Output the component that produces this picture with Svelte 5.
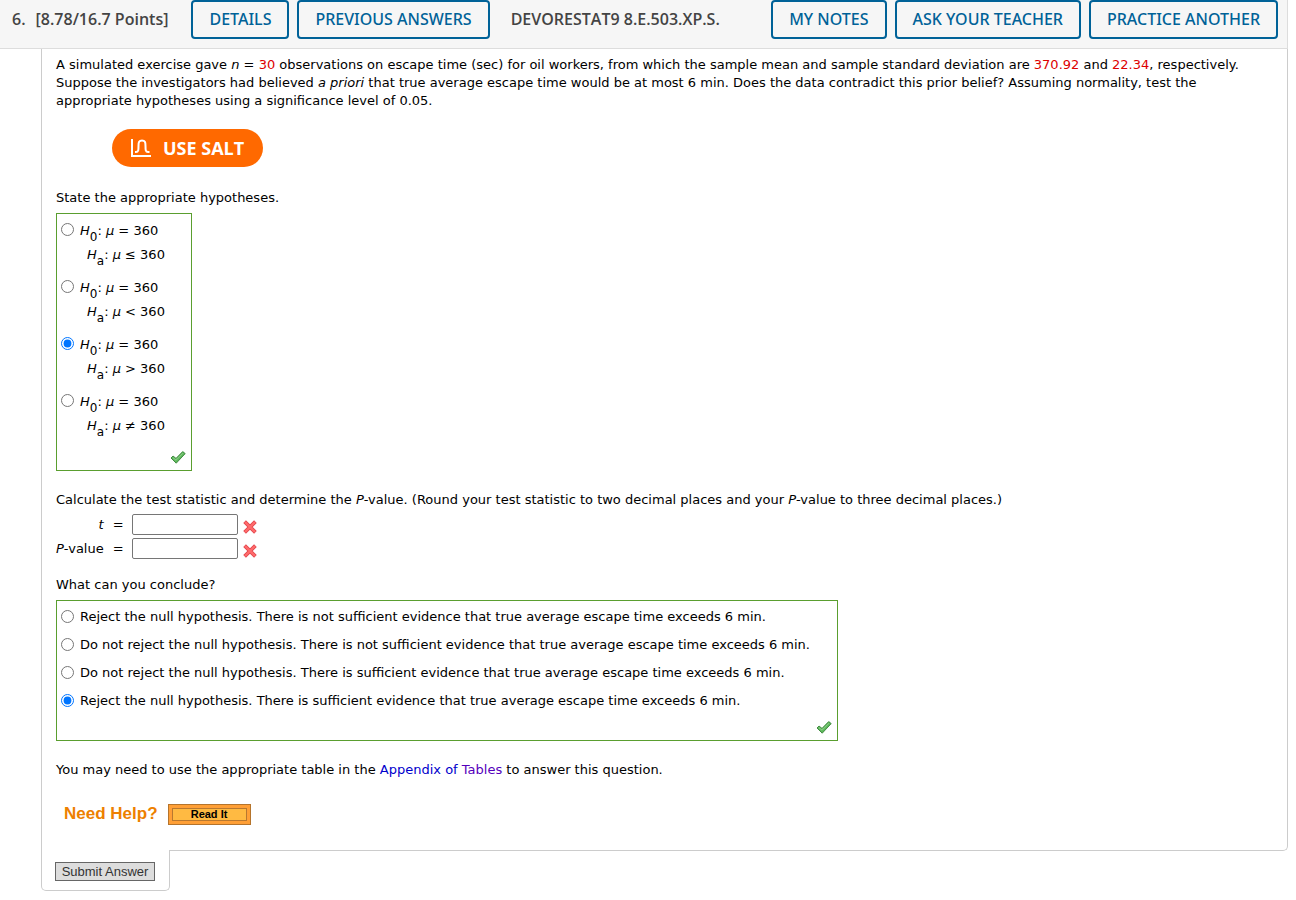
<script lang="ts">
  const hypotheses = [
    { id: 'le', sign: '≤' },
    { id: 'lt', sign: '<' },
    { id: 'gt', sign: '>' },
    { id: 'ne', sign: '≠' },
  ];

  const conclusions = [
    'Reject the null hypothesis. There is not sufficient evidence that true average escape time exceeds 6 min.',
    'Do not reject the null hypothesis. There is not sufficient evidence that true average escape time exceeds 6 min.',
    'Do not reject the null hypothesis. There is sufficient evidence that true average escape time exceeds 6 min.',
    'Reject the null hypothesis. There is sufficient evidence that true average escape time exceeds 6 min.',
  ];

  let hypothesis = $state('gt');
  let conclusion = $state(3);
  let tStat = $state('');
  let pValue = $state('');
</script>

{#snippet check()}
  <svg class="check" width="16" height="16" viewBox="0 0 16 16" role="img" aria-label="Correct">
    <path d="M1 9 3 7 6 9.4 12.7 2.6 15.2 4.6 6.2 14.2Z" fill="#5cb85a" stroke="#438b43" stroke-linejoin="round" />
    <path d="M2.8 8.6 6.1 11.2 13 4.2" fill="none" stroke="#92d08d" />
  </svg>
{/snippet}

{#snippet cross()}
  <svg class="cross" width="14" height="14" viewBox="0 0 14 14" role="img" aria-label="Incorrect">
    <path d="M1.6 1.6 12.4 12.4M12.4 1.6 1.6 12.4" stroke="#e0444c" stroke-width="3.8" />
    <path d="M2 2 12 12M12 2 2 12" stroke="#ff6b6b" stroke-width="2.4" />
  </svg>
{/snippet}

<div class="page">
  <header>
    <span class="number">6.</span>
    <span class="points">[8.78/16.7 Points]</span>
    <button class="nav">DETAILS</button>
    <button class="nav">PREVIOUS ANSWERS</button>
    <span class="source">DEVORESTAT9 8.E.503.XP.S.</span>
    <div class="actions">
      <button class="nav">MY NOTES</button>
      <button class="nav">ASK YOUR TEACHER</button>
      <button class="nav">PRACTICE ANOTHER</button>
    </div>
  </header>

  <main>
    <p>
      A simulated exercise gave <i>n</i> = <span class="rand">30</span> observations on escape time (sec) for oil
      workers, from which the sample mean and sample standard deviation are <span class="rand">370.92</span> and
      <span class="rand">22.34</span>, respectively. Suppose the investigators had believed <i>a priori</i> that true
      average escape time would be at most 6 min. Does the data contradict this prior belief? Assuming normality, test
      the appropriate hypotheses using a significance level of 0.05.
    </p>

    <button class="salt">
      <svg width="20" height="18" viewBox="0 0 20 18" fill="none" stroke="#fff" aria-hidden="true">
        <path d="M1 0V17H20" stroke-width="2" />
        <path d="M4 13H5C7.5 13 7.5 11 7.5 7C7.5 3 8 1.5 11 1.5S14.5 3 14.5 7C14.5 11 14.5 13 17 13H18.5" stroke-width="2" />
      </svg>
      USE SALT
    </button>

    <p id="hyp-label">State the appropriate hypotheses.</p>
    <div class="choices hyp" role="radiogroup" aria-labelledby="hyp-label">
      {#each hypotheses as h (h.id)}
        <label class="pair">
          <input type="radio" name="hypothesis" value={h.id} bind:group={hypothesis} />
          <span class="lines">
            <span class="line"><i>H</i><sub>0</sub>: <i>μ</i> = 360</span>
            <span class="line alt"><i>H</i><sub>a</sub>: <i>μ</i> {h.sign} 360</span>
          </span>
        </label>
      {/each}
      {@render check()}
    </div>

    <p class="calc">
      Calculate the test statistic and determine the <i>P</i>-value. (Round your test statistic to two decimal places
      and your <i>P</i>-value to three decimal places.)
    </p>
    <div class="answers">
      <label for="t-stat"><i>t</i></label>
      <span>=</span>
      <input id="t-stat" type="text" bind:value={tStat} />
      {@render cross()}
      <label for="p-value"><i>P</i>-value</label>
      <span>=</span>
      <input id="p-value" type="text" bind:value={pValue} />
      {@render cross()}
    </div>

    <p id="con-label" class="conclude">What can you conclude?</p>
    <div class="choices con" role="radiogroup" aria-labelledby="con-label">
      {#each conclusions as text, i}
        <label class="single">
          <input type="radio" name="conclusion" value={i} bind:group={conclusion} />
          <span>{text}</span>
        </label>
      {/each}
      {@render check()}
    </div>

    <p class="tables">
      You may need to use the appropriate table in the <a href="#tables">Appendix of <span class="visited">Tables</span></a> to answer this question.
    </p>

    <div class="help">
      <span>Need Help?</span>
      <button class="read">Read It</button>
    </div>
  </main>

  <footer>
    <button class="submit">Submit Answer</button>
  </footer>
</div>

<style>
  :global(body) { margin: 0; background: #fff; }
  .page {
    margin-right: 8px;
    font-family: Verdana, "DejaVu Sans", sans-serif;
    font-size: 13px; line-height: 18px; color: #000;
  }
  p { margin: 0; }
  button { cursor: pointer; }

  header {
    display: flex; align-items: flex-start;
    height: 48px; padding: 0 9px 0 12px;
    background: #f6f6f6; border-bottom: 1px solid #ddd; border-right: 1px solid #ddd;
    font: 600 16px/38px "Open Sans", sans-serif; color: #444;
    white-space: nowrap;
  }
  .number { margin-right: 10px; }
  .points { margin-right: 23px; }
  .nav {
    box-sizing: border-box; height: 39px; padding: 0 16px 1px; margin-right: 8px;
    font: 500 16px/34px "Noto Sans", "Open Sans", sans-serif; color: #006298;
    background: #f6f6f6; border: 2px solid #006298; border-radius: 4px;
  }
  .source { margin-left: 13px; }
  .actions { display: flex; margin-left: auto; }
  .actions .nav:last-child { margin-right: 0; }

  main {
    margin-left: 41px; padding: 7px 14px 25px;
    border: 1px solid #ccc; border-top: 0; border-radius: 0 0 5px 0;
  }
  .rand { color: #d00; }
  .salt {
    display: flex; align-items: center; gap: 12px;
    height: 38px; margin: 19px 0 22px 56px; padding: 0 19px;
    font: 700 18px/24px "Open Sans", sans-serif; color: #fff;
    background: #ff6900; border: 0; border-radius: 19px;
  }

  .choices {
    box-sizing: border-box; display: flex; flex-direction: column;
    border: 1px solid #5a9e2f;
  }
  .choices input { width: 13px; height: 13px; margin: 0 6px 0 4px; flex: none; }
  .choices .check { align-self: flex-end; margin-right: 5px; }
  .hyp { width: 136px; margin-top: 6px; padding: 5px 0; }
  .con { width: 782px; max-width: 100%; margin-top: 6px; padding: 2px 0 5px; }
  .pair { display: flex; margin-bottom: 9px; }
  .pair input { margin-top: 4px; }
  .lines { display: flex; flex-direction: column; }
  .line { height: 24px; line-height: 24px; white-space: nowrap; }
  .alt { padding-left: 7px; }
  sub { font-size: 12px; line-height: 0; vertical-align: -6px; }
  .hyp .check { margin-top: 2px; }
  .single { display: flex; align-items: flex-start; min-height: 28px; line-height: 28px; }
  .single input { margin-top: 7px; }
  .con .check { margin-top: 4px; }

  .calc { margin-top: 20px; }
  .answers {
    display: grid; grid-template-columns: max-content max-content 106px max-content;
    align-items: center; column-gap: 8px; row-gap: 3px; margin-top: 5px;
  }
  .answers label { padding-right: 1px; text-align: right; }
  .answers input {
    box-sizing: border-box; width: 106px; height: 21px; padding: 1px 2px;
    border: 1px solid #767676; border-radius: 2px; background: #fff;
  }
  .cross { margin: 5px 0 0 -3px; }
  .conclude { margin-top: 17px; }

  .tables { margin-top: 20px; }
  a { color: #00c; text-decoration: none; }
  .visited { color: #50b; }
  .help {
    display: flex; align-items: center; gap: 10px; margin: 24px 0 0 8px;
    font: 700 17px/22px "Liberation Sans", Arial, sans-serif; color: #ed8000;
  }
  .read {
    box-sizing: border-box; width: 83px; height: 21px; padding: 0;
    font: 700 11px/14px "Liberation Sans", Arial, sans-serif; color: #000;
    background: #ffba42; border: 1px solid #b5742c;
    box-shadow: inset 0 0 0 3px #ff9f36, inset 0 0 0 4px #b87830;
  }

  /* overlaps the bottom border of main so the tab opens into it */
  footer {
    box-sizing: border-box; width: 129px; margin: -1px 0 0 41px; padding: 12px 13px 9px;
    background: #fff;
    border: 1px solid #ccc; border-top: 0; border-radius: 0 0 5px 5px;
  }
  .submit {
    display: block; box-sizing: border-box; width: 100px; height: 19px; padding: 0;
    font: 13px/15px "Liberation Sans", Arial, sans-serif; color: #333;
    background: #ddd; border: 1px solid #666; white-space: nowrap;
  }
</style>
